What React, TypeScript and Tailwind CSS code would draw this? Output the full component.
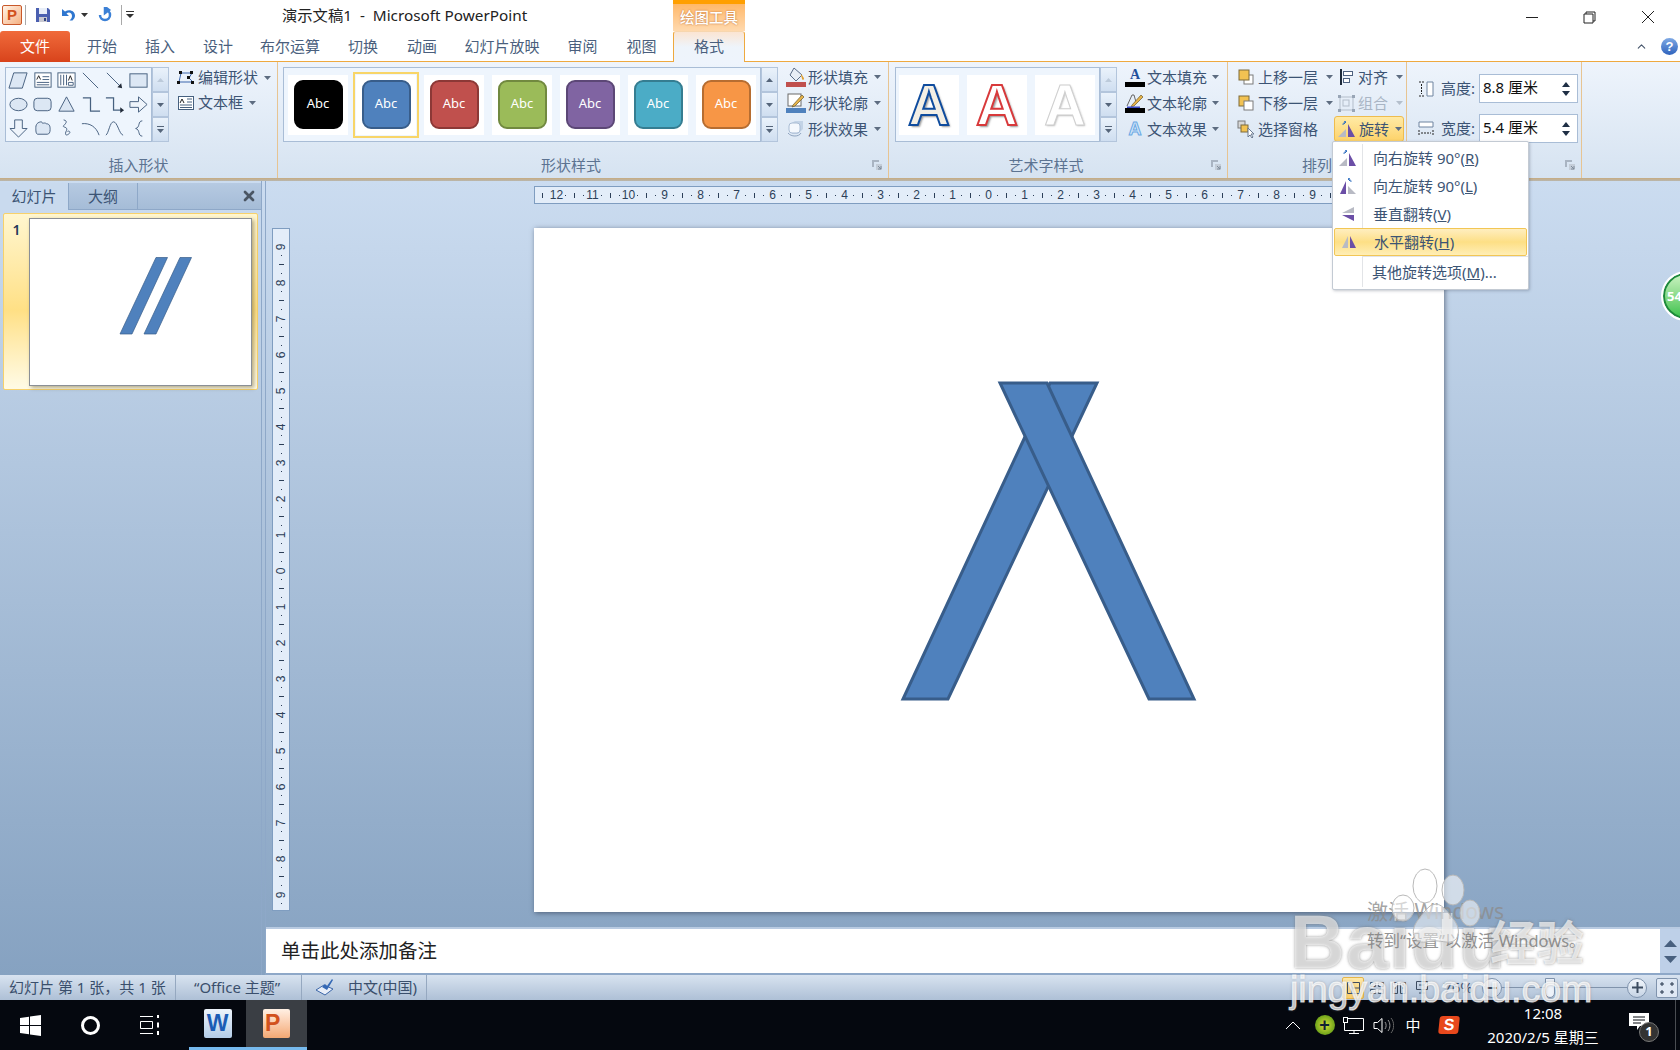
import type { ReactNode } from 'react';
import { ChevronUp, X } from 'lucide-react';

// ---------------------------------------------------------------------------
// Small shared bits
// ---------------------------------------------------------------------------

const INK = '#46607f';

function Caret({ disabled }: { disabled?: boolean }) {
  return (
    <svg width="7" height="4" viewBox="0 0 7 4" className="shrink-0">
      <path d="M0 0h7L3.5 4z" fill={disabled ? '#b4bfcc' : '#5d6c80'} />
    </svg>
  );
}

function Launcher() {
  return (
    <svg width="12" height="12" viewBox="0 0 12 12">
      <path d="M1 1h7v2H3v5H1z" fill="#a9b4c2" />
      <path d="M5 5h6v6H5z" fill="#c4cdd8" />
      <path d="M7 7l3 3M10 7v3H7" stroke="#7f8b9a" fill="none" />
    </svg>
  );
}

function RibbonRow({
  icon,
  label,
  disabled,
  textWidth,
}: {
  icon: ReactNode;
  label: string;
  disabled?: boolean;
  textWidth: string;
}) {
  return (
    <div className="flex h-[26px] items-center">
      <div className="flex w-[24px] shrink-0 justify-center">{icon}</div>
      <span className={`${textWidth} text-[15px] leading-none whitespace-nowrap ${disabled ? 'text-[#a9b5c4]' : 'text-[#3c5474]'}`}>
        {label}
      </span>
      <Caret disabled={disabled} />
    </div>
  );
}

function ScrollButtons({ muted }: { muted?: boolean }) {
  const btn = 'flex h-[25px] items-center justify-center border border-[#b3c5dc] bg-linear-to-b from-[#eaf2fb] to-[#cfdef0]';
  return (
    <div className="flex w-[17px] shrink-0 flex-col">
      <div className={btn}>
        <svg width="7" height="4" viewBox="0 0 7 4"><path d="M0 4h7L3.5 0z" fill={muted ? '#bccada' : '#55657a'} /></svg>
      </div>
      <div className={btn}>
        <svg width="7" height="4" viewBox="0 0 7 4"><path d="M0 0h7L3.5 4z" fill="#55657a" /></svg>
      </div>
      <div className={btn}>
        <svg width="7" height="7" viewBox="0 0 7 7"><path d="M0 0h7v1H0zM0 3h7L3.5 7z" fill="#55657a" /></svg>
      </div>
    </div>
  );
}

function Group({
  className,
  label,
  labelClass = '',
  launcher,
  children,
}: {
  className: string;
  label: string;
  labelClass?: string;
  launcher?: boolean;
  children: ReactNode;
}) {
  return (
    <div className={`flex shrink-0 flex-col border-r border-[#e7c492] ${className}`}>
      <div className="flex h-[92px]">{children}</div>
      <div className="flex h-[24px] items-center pb-[2px]">
        <span className={`flex-1 text-center text-[15px] leading-none text-[#5c7391] ${labelClass}`}>{label}</span>
        {launcher && (
          <div className="mr-[5px] flex">
            <Launcher />
          </div>
        )}
      </div>
    </div>
  );
}

// ---------------------------------------------------------------------------
// Icons drawn for the ribbon
// ---------------------------------------------------------------------------

const shapeFill = '#dce7f4';
const shapeIcons: ReactNode[] = [
  <path key="a" d="M6 3h14l-5 16H1z" fill={shapeFill} stroke={INK} />,
  <g key="b"><rect x="3" y="3" width="17" height="15" fill="#fff" stroke={INK} /><path d="M11 7h7M11 10h7M5 13h13M5 15.500h13" stroke={INK} /><path d="M5 10l2-4 2 4" stroke="#222" fill="none" /></g>,
  <g key="c"><rect x="2" y="3" width="18" height="15" fill="#fff" stroke={INK} /><path d="M5 5v11M8 5v11M11 5v11" stroke={INK} /><path d="M13 11l2-5 2 5" stroke="#222" fill="none" /><path d="M13 13h5v3h-5z" stroke={INK} fill="none" /></g>,
  <path key="d" d="M3 3l16 16" stroke={INK} fill="none" />,
  <g key="e"><path d="M3 3l14 14" stroke={INK} /><path d="M19 19l-5-1 4-4z" fill="#222c3a" /></g>,
  <rect key="f" x="2" y="4" width="18" height="14" fill={shapeFill} stroke={INK} />,
  <ellipse key="g" cx="11" cy="11" rx="9" ry="6.500" fill={shapeFill} stroke={INK} />,
  <rect key="h" x="2" y="4.500" width="18" height="13" rx="3.500" fill={shapeFill} stroke={INK} />,
  <path key="i" d="M11 3l8 15H3z" fill={shapeFill} stroke={INK} />,
  <path key="j" d="M3 4h8v14h10" fill="none" stroke={INK} strokeWidth="1.300" />,
  <g key="k"><path d="M2 4h8v13h9" fill="none" stroke={INK} strokeWidth="1.300" /><path d="M21 17l-4-3v6z" fill="#222c3a" /></g>,
  <path key="l" d="M2 8h9V3l9 8-9 8v-5H2z" fill="#eef4fb" stroke={INK} />,
  <path key="m" d="M7 2h8v9h5l-9 9-9-9h5z" fill="#eef4fb" stroke={INK} />,
  <path key="n" d="M4 10c0-5 4-6 6-6 1 3 3 0 5 2 4 0 4 4 4 6 0 3-1 5-3 5H6c-2 0-2-4-2-7z" fill={shapeFill} stroke={INK} />,
  <path key="o" d="M8 2c5 1 2 4 0 6s5 1 3 5-1 6 2 4 1-4-1-3" fill="none" stroke={INK} />,
  <path key="p" d="M2 6c8-1 15 3 18 12" fill="none" stroke={INK} />,
  <path key="q" d="M2 18c3-2 4-14 8-14s6 13 10 14" fill="none" stroke={INK} />,
  <path key="r" d="M15 3c-5 0-2 7-7 8 5 1 2 8 7 8" fill="none" stroke={INK} />,
];

function EditShapeIcon() {
  return (
    <svg width="18" height="15" viewBox="0 0 18 15">
      <path d="M4 3h11l-3 5 4 4H2z" fill="none" stroke="#3d66ad" />
      <path d="M2 1h3v3H2zM13 1h3v3h-3zM10 6h3v3h-3zM0 11h3v3H0zM14 11h3v3h-3z" fill="#111" />
    </svg>
  );
}

function TextBoxIcon() {
  return (
    <svg width="16" height="14" viewBox="0 0 16 14">
      <rect x="0.500" y="0.500" width="15" height="13" fill="#fff" stroke={INK} />
      <path d="M9 3h5M9 6h5M2 9h12M2 11.500h12" stroke={INK} />
      <path d="M2 7l2-4 2 4" stroke="#222" fill="none" />
    </svg>
  );
}

function FillIcon() {
  return (
    <svg width="20" height="20" viewBox="0 0 20 20">
      <path d="M8 1l8 7-6 6-6-6z" fill="#e8eef6" stroke="#5b6d88" />
      <path d="M15 7c2 2 3 4 3 5s-2 1-2 0-1-3-1-5z" fill="#e0a030" />
      <rect y="15" width="20" height="5" fill="#c0504d" />
    </svg>
  );
}

function OutlineIcon() {
  return (
    <svg width="20" height="20" viewBox="0 0 20 20">
      <rect x="2" y="1" width="13" height="12" fill="#fff" stroke="#6a6a6a" />
      <path d="M7 12l9-10 2 2-9 9-3 1z" fill="#e6b34a" stroke="#6b5a2d" strokeWidth="0.700" />
      <rect y="15" width="20" height="5" fill="#4f81bd" />
    </svg>
  );
}

function EffectIcon() {
  return (
    <svg width="18" height="18" viewBox="0 0 18 18">
      <path d="M3 4l5-3h8v8l-5 5H5z" fill="#c3d3e6" />
      <rect x="2" y="3" width="11" height="10" rx="3" fill="#f4f8fd" stroke="#a9bcd4" />
      <path d="M1 13c3 4 11 4 13 0" stroke="#8ea3bf" fill="none" />
    </svg>
  );
}

function TextFillIcon() {
  return (
    <svg width="20" height="20" viewBox="0 0 20 20">
      <text x="10" y="12" textAnchor="middle" fontSize="14" fontWeight="700" fontFamily="Liberation Serif" fill="#1f4f9c">A</text>
      <rect y="15" width="20" height="5" fill="#000" />
    </svg>
  );
}

function TextOutlineIcon() {
  return (
    <svg width="20" height="20" viewBox="0 0 20 20">
      <path d="M2 13l5-11h2l2 7" fill="none" stroke="#666" />
      <path d="M7 12l9-10 2 2-9 9-3 1z" fill="#e6b34a" stroke="#6b5a2d" strokeWidth="0.700" />
      <rect y="15" width="20" height="5" fill="#000" />
      <rect x="2" y="13.500" width="13" height="1.500" fill="#3b49c9" />
    </svg>
  );
}

function TextEffectIcon() {
  return (
    <svg width="18" height="20" viewBox="0 0 18 20">
      <text x="9" y="16" textAnchor="middle" fontSize="18" fontWeight="700" fontFamily="Liberation Sans" fill="#d4e6f8" stroke="#6aa9e4">A</text>
    </svg>
  );
}

function LayerIcon({ front }: { front: 'up' | 'down' }) {
  return (
    <svg width="16" height="16" viewBox="0 0 16 16">
      {front === 'up' ? (
        <>
          <rect x="6" y="6" width="9" height="9" fill="#fff" stroke="#7b7b7b" />
          <rect x="1" y="1" width="10" height="10" fill="#f2c252" stroke="#7d6a3a" />
        </>
      ) : (
        <>
          <rect x="1" y="1" width="10" height="10" fill="#f2c252" stroke="#7d6a3a" />
          <rect x="6" y="6" width="9" height="9" fill="#fff" stroke="#7b7b7b" />
        </>
      )}
    </svg>
  );
}

function PaneIcon() {
  return (
    <svg width="18" height="18" viewBox="0 0 18 18">
      <rect x="1" y="1" width="7" height="7" fill="#d7d7d7" stroke="#7b7b7b" />
      <rect x="4" y="5" width="7" height="7" fill="#f2c252" stroke="#7d6a3a" />
      <path d="M11 8v9l2-2 2 3 1-1-2-3h3z" fill="#fff" stroke="#6a7a90" />
    </svg>
  );
}

function AlignIcon() {
  return (
    <svg width="15" height="16" viewBox="0 0 15 16">
      <path d="M1 0h2v16H1z" fill="#1e2a3a" />
      <rect x="4.500" y="2.500" width="9" height="4" fill="#fff" stroke="#4f6280" />
      <rect x="4.500" y="9.500" width="6" height="4" fill="#fff" stroke="#4f6280" />
    </svg>
  );
}

function GroupIcon() {
  return (
    <svg width="17" height="17" viewBox="0 0 17 17">
      <rect x="2" y="2" width="13" height="13" fill="none" stroke="#b3bdca" />
      <rect x="5" y="5" width="6" height="6" fill="none" stroke="#b3bdca" />
      <path d="M0 0h3v3H0zM14 0h3v3h-3zM0 14h3v3H0zM14 14h3v3h-3z" fill="#98a5b6" />
    </svg>
  );
}

function FlipIcon({ kind }: { kind: 'right' | 'left' | 'vertical' | 'horizontal' }) {
  const grey = '#b8bac4';
  const purple = '#6b4ea6';
  if (kind === 'vertical') {
    return (
      <svg width="16" height="16" viewBox="0 0 16 16">
        <path d="M14 1v6L2 7z" fill={grey} />
        <path d="M14 15V9L2 9z" fill={purple} />
      </svg>
    );
  }
  if (kind === 'horizontal') {
    return (
      <svg width="16" height="16" viewBox="0 0 16 16">
        <path d="M7 2v12H1z" fill={grey} />
        <path d="M9 2v12h6z" fill={purple} />
      </svg>
    );
  }
  if (kind === 'left') {
    return (
      <svg width="18" height="17" viewBox="0 0 18 17">
        <path d="M7 3v13H1z" fill={purple} />
        <path d="M9 8v8h8z" fill={grey} />
        <path d="M9 1c2 0 3 1 3 3M9 1l2-1M9 1l2 2" stroke="#2f6fc0" fill="none" />
      </svg>
    );
  }
  return (
    <svg width="18" height="17" viewBox="0 0 18 17">
      <path d="M10 3v13h7z" fill={purple} />
      <path d="M8 8v8H0z" fill={grey} />
      <path d="M8 1C6 1 5 2 5 4M8 1L6 0M8 1L6 3" stroke="#2f6fc0" fill="none" />
    </svg>
  );
}

// ---------------------------------------------------------------------------
// Title bar and tabs
// ---------------------------------------------------------------------------

function TitleBar() {
  return (
    <div className="flex h-[31px] shrink-0 bg-white">
      <div className="flex w-[282px] items-center pb-[2px] pl-[2px]">
        <div className="flex h-[20px] w-[20px] items-center justify-center rounded-[2px] border border-[#c9582a] bg-linear-to-br from-[#fff3e6] to-[#f4b183] text-[15px] leading-none font-bold text-[#d2511d] [font-family:'Liberation_Sans',sans-serif]">
          P
        </div>
        <div className="ml-[3px] h-[20px] w-px bg-[#a9a9a9]" />
        <svg width="16" height="16" viewBox="0 0 16 16" className="ml-[9px]">
          <path d="M1 1h12l2 2v12H1z" fill="#4a5fb0" />
          <path d="M4 1h8v6H4z" fill="#e8eef8" />
          <path d="M4 10h8v5H4z" fill="#c8c8d0" />
          <path d="M9 11h2v3H9z" fill="#33457f" />
        </svg>
        <svg width="16" height="16" viewBox="0 0 16 16" className="ml-[9px]">
          <path d="M2 2v7h7L6.500 6.500C9 4.500 12 6 12 9c0 2-1 3-2.500 4.500h3C14 12 15 10.500 15 8.500 15 4 9.500 1.500 5 4.500z" fill="#2f76cf" />
        </svg>
        <div className="ml-[5px] flex"><svg width="7" height="4" viewBox="0 0 7 4"><path d="M0 0h7L3.500 4z" fill="#333" /></svg></div>
        <svg width="16" height="16" viewBox="0 0 16 16" className="ml-[9px]">
          <path d="M3 8a5 5 0 1 0 5-5M8 0v6l4-3z" fill="none" stroke="#3b80d6" strokeWidth="2.500" />
        </svg>
        <div className="ml-[8px] h-[20px] w-px bg-[#a9a9a9]" />
        <svg width="8" height="7" viewBox="0 0 8 7" className="ml-[4px]">
          <path d="M0 0h8v1H0zM0 3h8L4 7z" fill="#333" />
        </svg>
      </div>
      <div className="w-[391px] pt-[6px] text-[15.300px] leading-[18px] whitespace-nowrap text-[#222]">
        演示文稿1&nbsp;&nbsp;-&nbsp;&nbsp;Microsoft PowerPoint
      </div>
      <div className="w-[72px] border-t-4 border-[#ff9f00] bg-linear-to-b from-[#ffb868] to-[#ffd9ae] text-center text-[14.500px] leading-[27px] font-medium text-white [text-shadow:0_0_2px_#b9672a]">
        绘图工具
      </div>
      <div className="flex flex-1 items-start justify-end">
        <div className="flex w-[58px] justify-center pt-[17px]"><div className="h-px w-[12px] bg-[#222]" /></div>
        <div className="flex w-[56px] justify-center pt-[11px]">
          <svg width="13" height="13" viewBox="0 0 13 13"><path d="M3 3V1h9v9h-2M1 3h9v9H1z" fill="none" stroke="#222" /></svg>
        </div>
        <div className="flex w-[63px] justify-center pt-[10px] pr-[2px]">
          <svg width="14" height="14" viewBox="0 0 14 14"><path d="M1 1l12 12M13 1L1 13" stroke="#222" /></svg>
        </div>
      </div>
    </div>
  );
}

const TABS = [
  ['开始', 'w-[58px]'],
  ['插入', 'w-[58px]'],
  ['设计', 'w-[58px]'],
  ['布尔运算', 'w-[86px]'],
  ['切换', 'w-[60px]'],
  ['动画', 'w-[58px]'],
  ['幻灯片放映', 'w-[102px]'],
  ['审阅', 'w-[59px]'],
  ['视图', 'w-[59px]'],
];

function TabRow() {
  return (
    <div className="flex h-[31px] shrink-0 border-b border-[#eea93f] bg-white">
      <div className="mb-[-1px] flex w-[70px] items-center justify-center rounded-t-[3px] bg-linear-to-b from-[#f06a3a] to-[#d8431b] text-[15px] leading-none text-white">
        文件
      </div>
      <div className="w-[3px]" />
      {TABS.map(([name, width]) => (
        <div key={name} className={`flex items-center justify-center text-[15px] leading-none text-[#4a5f7d] ${width}`}>
          {name}
        </div>
      ))}
      <div className="w-[2px]" />
      <div className="mb-[-1px] flex w-[72px] items-center justify-center rounded-t-[3px] border-x border-t border-[#eea93f] border-t-[#f7d6ae] bg-linear-to-b from-[#fbe5d3] via-[#eef4fb] to-[#eef4fc] pb-[2px] text-[15px] leading-none text-[#4a5f7d]">
        格式
      </div>
      <div className="flex flex-1 items-center justify-end pr-[2px]">
        <ChevronUp className="mr-[13px] h-[13px] w-[13px] text-[#44546a]" strokeWidth={2} />
        <div className="flex h-[17px] w-[17px] items-center justify-center rounded-full bg-linear-to-b from-[#7fa9e4] to-[#2f63bd] text-[13px] leading-none font-bold text-white [font-family:'Liberation_Sans',sans-serif]">
          ?
        </div>
      </div>
    </div>
  );
}

// ---------------------------------------------------------------------------
// Ribbon
// ---------------------------------------------------------------------------

const STYLES = [
  ['bg-black', 'border-[#000000]'],
  ['bg-[#4f81bd]', 'border-[#385d8a]'],
  ['bg-[#c0504d]', 'border-[#8c3836]'],
  ['bg-[#9bbb59]', 'border-[#71893f]'],
  ['bg-[#8064a2]', 'border-[#5c4776]'],
  ['bg-[#4bacc6]', 'border-[#357d91]'],
  ['bg-[#f79646]', 'border-[#b66d31]'],
];

function StyleGallery() {
  return (
    <div className="flex h-[75px] w-[478px] shrink-0 items-center gap-[8px] border border-[#a9bdd6] bg-[#eef5fd] pl-[4px]">
      {STYLES.map(([fill, line], i) => (
        <div
          key={fill}
          className={`flex h-[60px] w-[60px] shrink-0 items-center justify-center bg-white ${i === 1 ? 'outline-2 outline-offset-1 outline-[#f8d568]' : ''}`}
        >
          <div className={`flex h-[49px] w-[49px] items-center justify-center rounded-[9px] border-2 pb-[2px] text-[13px] leading-none text-white ${fill} ${line}`}>
            Abc
          </div>
        </div>
      ))}
    </div>
  );
}

function ArtGallery() {
  const letter = "text-[58px] leading-none font-bold [font-family:'Liberation_Sans',sans-serif]";
  return (
    <div className="flex h-[75px] w-[205px] shrink-0 items-center gap-[8px] border border-[#a9bdd6] bg-[#eef5fd] pl-[3px]">
      <div className={`flex h-[60px] w-[60px] items-center justify-center bg-white text-[#f3efe5] [-webkit-text-stroke:2px_#0f4c9e] [text-shadow:2px_2px_2px_#9a9a9a] ${letter}`}>A</div>
      <div className={`flex h-[60px] w-[60px] items-center justify-center bg-white text-white [-webkit-text-stroke:2px_#d8393b] [text-shadow:2px_2px_2px_#9a9a9a] ${letter}`}>A</div>
      <div className={`flex h-[60px] w-[60px] items-center justify-center bg-white text-white [-webkit-text-stroke:1px_#cfcfcf] [text-shadow:1px_1px_2px_#bdbdbd] ${letter}`}>A</div>
    </div>
  );
}

function SizeField({ icon, label, value }: { icon: ReactNode; label: string; value: string }) {
  return (
    <div className="flex h-[29px] items-center">
      <div className="flex w-[34px] shrink-0 justify-center pl-[3px]">{icon}</div>
      <span className="w-[38px] text-[15px] leading-none whitespace-nowrap text-[#3c5474]">{label}</span>
      <div className="flex h-[29px] w-[99px] items-center border border-[#a9bdd6] bg-white pl-[3px] text-[15px] leading-none text-[#111]">
        <span className="flex-1 pb-[3px] whitespace-nowrap">{value}</span>
        <div className="mr-[7px] flex flex-col gap-[4px]">
          <svg width="8" height="5" viewBox="0 0 8 5"><path d="M0 5h8L4 0z" fill="#1f2f45" /></svg>
          <svg width="8" height="5" viewBox="0 0 8 5"><path d="M0 0h8L4 5z" fill="#1f2f45" /></svg>
        </div>
      </div>
    </div>
  );
}

function Ribbon() {
  return (
    <div className="flex h-[116px] shrink-0 bg-linear-to-b from-[#eef4fc] to-[#d6e3f1]">
      <Group className="w-[278px]" label="插入形状">
        <div className="flex pt-[5px] pl-[5px]">
          <div className="grid h-[75px] w-[147px] grid-cols-6 grid-rows-3 border border-[#a9bdd6] bg-[#eef5fd]">
            {shapeIcons.map((icon, i) => (
              <div key={i} className="flex items-center justify-center">
                <svg width="21" height="21" viewBox="0 0 22 22">{icon}</svg>
              </div>
            ))}
          </div>
          <ScrollButtons muted />
        </div>
        <div className="flex flex-col pt-[3px] pl-[8px]">
          <div className="flex h-[25px] items-center gap-[3px]">
            <EditShapeIcon />
            <span className="w-[63px] text-[15px] leading-none whitespace-nowrap text-[#3c5474]">编辑形状</span>
            <Caret />
          </div>
          <div className="flex h-[25px] items-center gap-[4px]">
            <div className="flex w-[17px] justify-center"><TextBoxIcon /></div>
            <span className="w-[47px] text-[15px] leading-none whitespace-nowrap text-[#3c5474]">文本框</span>
            <Caret />
          </div>
        </div>
      </Group>
      <Group className="w-[611px]" label="形状样式" labelClass="pr-[7px]" launcher>
        <div className="flex pt-[5px] pl-[5px]">
          <StyleGallery />
          <ScrollButtons />
        </div>
        <div className="flex flex-col pt-[2px] pl-[6px]">
          <RibbonRow icon={<FillIcon />} label="形状填充" textWidth="w-[66px]" />
          <RibbonRow icon={<OutlineIcon />} label="形状轮廓" textWidth="w-[66px]" />
          <RibbonRow icon={<EffectIcon />} label="形状效果" textWidth="w-[66px]" />
        </div>
      </Group>
      <Group className="w-[339px]" label="艺术字样式" labelClass="pr-[7px]" launcher>
        <div className="flex pt-[5px] pl-[6px]">
          <ArtGallery />
          <ScrollButtons muted />
        </div>
        <div className="flex flex-col pt-[2px] pl-[6px]">
          <RibbonRow icon={<TextFillIcon />} label="文本填充" textWidth="w-[65px]" />
          <RibbonRow icon={<TextOutlineIcon />} label="文本轮廓" textWidth="w-[65px]" />
          <RibbonRow icon={<TextEffectIcon />} label="文本效果" textWidth="w-[65px]" />
        </div>
      </Group>
      <Group className="w-[179px]" label="排列">
        <div className="flex pt-[2px] pl-[6px]">
          <div className="flex w-[100px] flex-col">
            <RibbonRow icon={<LayerIcon front="up" />} label="上移一层" textWidth="w-[68px]" />
            <RibbonRow icon={<LayerIcon front="down" />} label="下移一层" textWidth="w-[68px]" />
            <div className="flex h-[26px] items-center">
              <div className="flex w-[24px] justify-center"><PaneIcon /></div>
              <span className="text-[15px] leading-none whitespace-nowrap text-[#3c5474]">选择窗格</span>
            </div>
          </div>
          <div className="flex flex-col">
            <RibbonRow icon={<AlignIcon />} label="对齐" textWidth="w-[38px]" />
            <RibbonRow icon={<GroupIcon />} label="组合" textWidth="w-[38px]" disabled />
            <div className="flex h-[26px] w-[70px] items-center rounded-[3px] border border-[#eebc4e] bg-linear-to-b from-[#ffeaa5] to-[#fdd268]">
              <div className="flex w-[24px] justify-center"><FlipIcon kind="right" /></div>
              <span className="w-[36px] text-[15px] leading-none text-[#3c5474]">旋转</span>
              <Caret />
            </div>
          </div>
        </div>
      </Group>
      <Group className="w-[175px]" label="大小" launcher>
        <div className="flex flex-col gap-[11px] pt-[12px]">
          <SizeField
            label="高度:"
            value="8.8 厘米"
            icon={
              <svg width="16" height="16" viewBox="0 0 16 16">
                <path d="M9 1h6v14H9z" fill="#fff" stroke="#6f84a0" />
                <path d="M1 1h5M1 15h5M3.500 3v10" stroke="#222" strokeDasharray="2 1" />
              </svg>
            }
          />
          <SizeField
            label="宽度:"
            value="5.4 厘米"
            icon={
              <svg width="16" height="16" viewBox="0 0 16 16">
                <path d="M1 1h14v5H1z" fill="#fff" stroke="#6f84a0" />
                <path d="M1 9v6M15 9v6M3 12h10" stroke="#222" strokeDasharray="2 1" />
              </svg>
            }
          />
        </div>
      </Group>
      <div className="flex-1" />
    </div>
  );
}

// ---------------------------------------------------------------------------
// Rulers
// ---------------------------------------------------------------------------

const RULER_VALUES = [12, 11, 10, 9, 8, 7, 6, 5, 4, 3, 2, 1, 0, 1, 2, 3, 4, 5, 6, 7, 8, 9, 10];
const V_RULER_VALUES = [9, 8, 7, 6, 5, 4, 3, 2, 1, 0, 1, 2, 3, 4, 5, 6, 7, 8, 9];

function HorizontalRuler() {
  return (
    <div className="ml-[268px] flex h-[18px] w-[820px] items-center overflow-hidden border border-[#7f9dc0] bg-[#e3edf9] pl-[7px] text-[12px] leading-none text-[#2c3f58] [font-family:'Liberation_Sans',sans-serif]">
      <div className="mr-[9px] h-[5px] w-px shrink-0 bg-[#2c3f58]" />
      {RULER_VALUES.map((v, i) => (
        <div key={i} className="grid w-[36px] shrink-0 grid-cols-4 items-center justify-items-center">
          <span>{v}</span>
          <div className="h-px w-px bg-[#2c3f58]" />
          <div className="h-[5px] w-px bg-[#2c3f58]" />
          <div className="h-px w-px bg-[#2c3f58]" />
        </div>
      ))}
    </div>
  );
}

function VerticalRuler() {
  return (
    <div className="ml-[6px] flex h-[683px] w-[18px] shrink-0 flex-col items-center overflow-hidden border border-[#7f9dc0] bg-[#e3edf9] pt-[13px] text-[12px] leading-none text-[#2c3f58] [font-family:'Liberation_Sans',sans-serif]">
      {V_RULER_VALUES.map((v, i) => (
        <div key={i} className="grid h-[36px] shrink-0 grid-rows-4 items-center justify-items-center">
          <span className="-rotate-90">{v}</span>
          <div className="h-px w-px bg-[#2c3f58]" />
          <div className="h-px w-[5px] bg-[#2c3f58]" />
          <div className="h-px w-px bg-[#2c3f58]" />
        </div>
      ))}
    </div>
  );
}

// ---------------------------------------------------------------------------
// Panels
// ---------------------------------------------------------------------------

function SlidePanel() {
  return (
    <div className="flex w-[262px] shrink-0 flex-col border-r border-[#8ea8c8] pt-[2px]">
      <div className="flex h-[27px] border-b border-[#8ea8c8]">
        <div className="mb-[-1px] flex w-[69px] items-center justify-center border-r border-[#8ea8c8] bg-[#c9daee] text-[15px] leading-none text-[#3c5474]">
          幻灯片
        </div>
        <div className="flex w-[69px] items-center justify-center border-r border-[#8ea8c8] bg-linear-to-b from-[#b6cae2] to-[#a5bcd7] text-[15px] leading-none text-[#3c5474]">
          大纲
        </div>
        <div className="flex flex-1 items-center justify-end bg-linear-to-b from-[#b6cae2] to-[#a5bcd7] pr-[4px]">
          <X className="h-[16px] w-[16px] text-[#4a5563]" strokeWidth={4} />
        </div>
      </div>
      <div className="mx-[3px] mt-[3px] flex h-[177px] items-start rounded-[2px] border border-[#f7d16b] bg-linear-to-b from-[#fff6cf] via-[#ffe085] via-55% to-[#fffbe6] pt-[4px]">
        <span className="w-[25px] pt-[5px] text-center text-[14px] leading-none font-semibold text-[#22395a]">1</span>
        <div className="h-[168px] w-[223px] border border-[#8a8f96] bg-white shadow-[2px_2px_4px_rgba(90,80,40,0.450)]">
          <svg width="221" height="166" viewBox="0 0 221 166">
            <path d="M126 38.500h11.500L102 115H90z" fill="#4f81bd" stroke="#385d8a" strokeWidth="0.700" />
            <path d="M150 38.500h11.500L126 115h-12z" fill="#4f81bd" stroke="#385d8a" strokeWidth="0.700" />
          </svg>
        </div>
      </div>
    </div>
  );
}

function Slide() {
  return (
    <div className="ml-[244px] h-[684px] w-[910px] shrink-0 bg-white shadow-[1px_1px_5px_rgba(40,50,70,0.600)]">
      <svg width="910" height="684" viewBox="0 0 910 684">
        <path d="M516 155h47L414 471h-45z" fill="#4f81bd" stroke="#385d8a" strokeWidth="3" />
        <path d="M466 155h47L660 471h-45z" fill="#4f81bd" stroke="#385d8a" strokeWidth="3" />
      </svg>
    </div>
  );
}

function Editor() {
  return (
    <div className="flex flex-1 flex-col">
      <div className="flex-1 pt-[5px]">
        <HorizontalRuler />
        <div className="mt-[24px] flex">
          <VerticalRuler />
          <Slide />
        </div>
      </div>
      <div className="flex h-[46px] shrink-0 border-t-2 border-[#b9cbe2] bg-white">
        <div className="flex-1 pt-[10px] pl-[15px] text-[19.500px] leading-[24px] text-[#222]">单击此处添加备注</div>
        <div className="flex w-[20px] flex-col items-center justify-around bg-[#bed0e8] py-[6px]">
          <svg width="13" height="7" viewBox="0 0 13 7"><path d="M0 7h13L6.500 0z" fill="#48607f" /></svg>
          <svg width="13" height="7" viewBox="0 0 13 7"><path d="M0 0h13L6.500 7z" fill="#48607f" /></svg>
        </div>
      </div>
      <div className="h-[2px] shrink-0 bg-[#8ea8c8]" />
    </div>
  );
}

// ---------------------------------------------------------------------------
// Status bar and task bar
// ---------------------------------------------------------------------------

function StatusBar() {
  return (
    <div className="flex h-[25px] shrink-0 items-center bg-linear-to-b from-[#d8e3f0] to-[#aec0d6] text-[15px] leading-none text-[#3a4f6c]">
      <div className="w-[176px] border-r border-[#95a8c0] py-[5px] pl-[9px] whitespace-nowrap">幻灯片 第 1 张，共 1 张</div>
      <div className="w-[126px] border-r border-[#95a8c0] py-[5px] pl-[18px] whitespace-nowrap">“Office 主题”</div>
      <div className="flex w-[46px] justify-center">
        <svg width="20" height="20" viewBox="0 0 20 20">
          <path d="M1 12l8-5 9 4-8 6z" fill="#e8eef8" stroke="#3b66a8" />
          <path d="M7 9l3-3 2 2 5-7 1 1-6 10z" fill="#3468b5" />
        </svg>
      </div>
      <div className="w-[79px] border-r border-[#95a8c0] py-[5px] whitespace-nowrap">中文(中国)</div>
      <div className="flex-1" />
      <div className="flex h-[22px] w-[22px] items-center justify-center rounded-[2px] border border-[#e4b54b] bg-linear-to-b from-[#ffe9a8] to-[#fdd06a]">
        <svg width="13" height="12" viewBox="0 0 13 12"><path d="M.5.5h12v11H.5zM5 .5v11M5 6h7.500" fill="none" stroke="#3d4c60" /></svg>
      </div>
      <div className="ml-[2px] flex w-[22px] justify-center">
        <svg width="14" height="12" viewBox="0 0 14 12"><path d="M.5.500h5v4h-5zM8.500.500h5v4h-5zM.5 7.500h5v4h-5zM8.500 7.500h5v4h-5z" fill="none" stroke="#3d4c60" /></svg>
      </div>
      <div className="flex w-[21px] justify-center">
        <svg width="14" height="12" viewBox="0 0 14 12"><path d="M.5.500h5v11h-5zM8.500.500h5v11h-5zM2 3h2M2 6h2M10 3h2M10 6h2" fill="none" stroke="#3d4c60" /></svg>
      </div>
      <div className="ml-[2px] flex w-[22px] justify-center">
        <svg width="14" height="13" viewBox="0 0 14 13"><path d="M1.500.500h11v8h-11zM7 8.500v3M4 12h6M4 4h6" fill="none" stroke="#3d4c60" /></svg>
      </div>
      <div className="ml-[10px] w-[30px] text-center whitespace-nowrap">76%</div>
      <div className="ml-[9px] flex h-[20px] w-[20px] items-center justify-center rounded-full border border-[#7f93ad] bg-linear-to-b from-[#f3f7fc] to-[#c5d3e4]">
        <div className="h-[2px] w-[10px] bg-[#3d4c60]" />
      </div>
      <div className="flex w-[125px] items-center">
        <div className="h-px flex-1 bg-[#8093ab]" />
        <div className="h-[20px] w-[10px] rounded-b-[5px] border border-[#7f93ad] bg-[#eef3fa]" />
        <div className="h-px w-[72px] bg-[#8093ab]" />
      </div>
      <div className="flex h-[20px] w-[20px] items-center justify-center rounded-full border border-[#7f93ad] bg-linear-to-b from-[#f3f7fc] to-[#c5d3e4]">
        <svg width="11" height="11" viewBox="0 0 11 11"><path d="M0 5.500h11M5.500 0v11" stroke="#3d4c60" strokeWidth="2" /></svg>
      </div>
      <div className="mr-[2px] ml-[9px] flex h-[20px] w-[22px] items-center justify-center rounded-[2px] border border-[#7f93ad] bg-[#dfe8f4]">
        <svg width="16" height="14" viewBox="0 0 16 14"><path d="M3 1v4M1 3h4M13 1v4M11 3h4M3 9v4M1 11h4M13 9v4M11 11h4" stroke="#26364c" /></svg>
      </div>
    </div>
  );
}

function TaskBar() {
  return (
    <div className="flex h-[50px] shrink-0 items-center bg-[#05080f] text-white">
      <div className="flex w-[60px] justify-center">
        <svg width="21" height="21" viewBox="0 0 21 21">
          <path d="M0 3l9-1.300V10H0zM10 1.500L21 0v10H10zM0 11h9v8.300L0 18zM10 11h11v10l-11-1.500z" fill="#fff" />
        </svg>
      </div>
      <div className="flex w-[60px] justify-center">
        <div className="h-[19px] w-[19px] rounded-full border-[3px] border-white" />
      </div>
      <div className="flex w-[60px] justify-center">
        <svg width="20" height="20" viewBox="0 0 20 20">
          <path d="M0 1.500h13M0 18.500h13M.5 6.500h12v7H.5z" fill="none" stroke="#fff" />
          <path d="M18 0v3M18 7.500v5M18 16v4" stroke="#fff" strokeWidth="2" />
        </svg>
      </div>
      <div className="ml-[9px] flex h-full w-[57px] items-center justify-center border-b-[3px] border-[#76b9ed]">
        <div className="flex h-[29px] w-[28px] items-center justify-center rounded-[2px] bg-linear-to-b from-[#eef4fb] to-[#b4cde8] text-[23px] leading-none font-bold text-[#1b5cb5] [font-family:'Liberation_Sans',sans-serif]">
          W
        </div>
      </div>
      <div className="flex h-full w-[61px] items-center justify-center border-b-[3px] border-[#76b9ed] bg-[#3a3e44]">
        <div className="flex h-[29px] w-[27px] items-center justify-start rounded-[2px] bg-linear-to-b from-[#fff0e4] to-[#f3a873] pl-[2px] text-[23px] leading-none font-bold text-[#d2511d] [font-family:'Liberation_Sans',sans-serif]">
          P
        </div>
      </div>
      <div className="flex-1" />
      <div className="flex w-[36px] justify-center">
        <svg width="16" height="9" viewBox="0 0 16 9"><path d="M1 8l7-7 7 7" fill="none" stroke="#fff" /></svg>
      </div>
      <div className="flex w-[27px] justify-center">
        <div className="flex h-[20px] w-[20px] items-center justify-center rounded-full bg-radial from-[#d8e23a] to-[#3e8a0c] text-[18px] leading-none font-bold text-[#123] [font-family:'Liberation_Sans',sans-serif]">
          +
        </div>
      </div>
      <div className="flex w-[31px] justify-center">
        <svg width="21" height="17" viewBox="0 0 21 17">
          <path d="M5 1.500h15.500v12H1.500V5M11 13.500v3M6 16.500h10" fill="none" stroke="#fff" />
          <rect x="0.500" y="0.500" width="4" height="5" fill="#05080f" stroke="#fff" />
        </svg>
      </div>
      <div className="flex w-[29px] justify-center">
        <svg width="21" height="17" viewBox="0 0 21 17">
          <path d="M1 5.500h3.500L9 1.500v14l-4.500-4H1z" fill="none" stroke="#fff" />
          <path d="M12 5c1.500 2 1.500 5 0 7M15 3c2.500 3 2.500 8 0 11" fill="none" stroke="#9a9a9a" />
          <path d="M18 1c3.500 4 3.500 11 0 15" fill="none" stroke="#666" />
        </svg>
      </div>
      <div className="w-[30px] text-center text-[15px] leading-none">中</div>
      <div className="flex w-[42px] justify-center">
        <div className="flex h-[18px] w-[20px] -skew-x-6 items-center justify-center rounded-[3px] bg-[#e8481c] text-[16px] leading-none font-bold text-white [font-family:'Liberation_Sans',sans-serif]">
          S
        </div>
      </div>
      <div className="flex w-[146px] flex-col items-center gap-[9px] text-[15px] leading-none whitespace-nowrap">
        <span>12:08</span>
        <span>2020/2/5 星期三</span>
      </div>
      <div className="relative flex w-[46px] justify-center pb-[8px]">
        <svg width="20" height="17" viewBox="0 0 20 17">
          <path d="M0 0h20v13H11l-3 4v-4H0z" fill="#fff" />
          <path d="M4 4h12M4 7h12M4 10h8" stroke="#05080f" />
        </svg>
        <div className="absolute top-[9px] left-[23px] flex h-[20px] w-[20px] items-center justify-center rounded-full border border-[#777] bg-[#333] text-[13px] leading-none font-bold text-white">
          1
        </div>
      </div>
      <div className="w-[13px]" />
      <div className="mr-[4px] h-full w-px bg-[#4a4d52]" />
    </div>
  );
}

// ---------------------------------------------------------------------------
// Overlays
// ---------------------------------------------------------------------------

const MENU_ITEMS = [
  { icon: <FlipIcon kind="right" />, text: '向右旋转 90°(', key: 'R', tail: ')' },
  { icon: <FlipIcon kind="left" />, text: '向左旋转 90°(', key: 'L', tail: ')' },
  { icon: <FlipIcon kind="vertical" />, text: '垂直翻转(', key: 'V', tail: ')' },
  { icon: <FlipIcon kind="horizontal" />, text: '水平翻转(', key: 'H', tail: ')', active: true },
];

function RotateMenu() {
  return (
    <div className="absolute top-[141px] left-[1332px] w-[197px] rounded-[2px] border border-[#c3cad3] bg-white py-[2px] text-[15px] leading-none text-[#3c5474] shadow-[1px_1px_3px_rgba(60,70,90,0.300)]">
      {MENU_ITEMS.map((item) => (
        <div
          key={item.key}
          className={`mx-[1px] flex h-[28px] items-center rounded-[2px] ${item.active ? 'border border-[#f2c655] bg-linear-to-b from-[#ffeebf] via-[#fddf85] to-[#ffeeb5]' : ''}`}
        >
          <div className="flex w-[28px] justify-center">{item.icon}</div>
          <div className={`h-full w-px ${item.active ? '' : 'bg-[#e2e4e7]'}`} />
          <span className="pl-[10px] whitespace-nowrap">
            {item.text}
            <u>{item.key}</u>
            {item.tail}
          </span>
        </div>
      ))}
      <div className="ml-[29px] h-px bg-[#e2e4e7]" />
      <div className="mx-[1px] flex h-[30px] items-center">
        <div className="w-[28px]" />
        <div className="h-full w-px bg-[#e2e4e7]" />
        <span className="pl-[9px] whitespace-nowrap">
          其他旋转选项(<u>M</u>)...
        </span>
      </div>
    </div>
  );
}

function GreenBadge() {
  return (
    <div className="absolute top-[273px] left-[1663px] flex h-[46px] w-[46px] items-center rounded-full border-2 border-[#1d8a3a] bg-linear-to-b from-[#c8f2c0] to-[#35c24c] pl-[2px] outline-2 outline-white">
      <span className="text-[13px] leading-none font-bold text-white">54</span>
    </div>
  );
}

function Watermark() {
  const logo = "text-[76px] leading-none font-bold text-white/60 [font-family:'Liberation_Sans',sans-serif] [text-shadow:0_0_3px_rgba(110,110,110,0.700)]";
  return (
    <div className="pointer-events-none absolute top-[868px] left-[1290px] flex w-[310px] flex-col">
      <div className="absolute top-[33px] left-[77px] text-[21px] leading-none whitespace-nowrap text-[#8c8c8c]/80">激活 Windows</div>
      <div className="absolute top-[65px] left-[77px] text-[16.500px] leading-none whitespace-nowrap text-[#777]/80">转到“设置”以激活 Windows。</div>
      <svg width="110" height="100" viewBox="0 0 110 100" className="absolute top-0 left-[100px]">
        <ellipse cx="35" cy="18" rx="12" ry="17" fill="#ffffff" fillOpacity="0.550" stroke="#b9b9b9" />
        <ellipse cx="63" cy="22" rx="11" ry="15" fill="#ffffff" fillOpacity="0.600" stroke="#b9b9b9" />
        <ellipse cx="13" cy="40" rx="11" ry="13" fill="#ffffff" fillOpacity="0.550" stroke="#b9b9b9" />
        <ellipse cx="80" cy="45" rx="10" ry="13" fill="#ffffff" fillOpacity="0.550" stroke="#b9b9b9" />
        <path d="M40 38c10-6 16 4 24 14 8 10 5 24-8 22-8-1-12-2-20 0-14 2-16-12-8-22 4-5 8-11 12-14z" fill="#ffffff" fillOpacity="0.500" stroke="#b9b9b9" />
      </svg>
      <div className="mt-[36px] flex items-center">
        <span className={`w-[200px] tracking-[1px] whitespace-nowrap ${logo}`}>Baidu</span>
        <span className="text-[47px] leading-none font-bold whitespace-nowrap text-white/70 [text-shadow:0_0_3px_rgba(110,110,110,0.700)]">经验</span>
      </div>
      <div className="mt-[-9px] text-[37.500px] leading-none font-normal whitespace-nowrap text-white/70 [-webkit-text-stroke:1px_rgba(255,255,255,0.700)] [font-family:'Liberation_Sans',sans-serif] [text-shadow:0_0_3px_rgba(110,110,110,0.600)]">
        jingyan.baidu.com
      </div>
    </div>
  );
}

// ---------------------------------------------------------------------------
// Page
// ---------------------------------------------------------------------------

export default function App() {
  return (
    <div className="relative flex h-[1050px] w-[1680px] flex-col overflow-hidden [font-family:'Noto_Sans','Noto_Sans_CJK_SC',sans-serif]">
      <TitleBar />
      <TabRow />
      <Ribbon />
      <div className="h-[3px] shrink-0 bg-linear-to-b from-[#c7ab80] to-[#b8b6ae]" />
      <div className="flex min-h-0 flex-1 bg-linear-to-b from-[#cbdcf0] to-[#86a2c1]">
        <SlidePanel />
        <div className="w-[4px] shrink-0 border-r border-[#8ea8c8]" />
        <Editor />
      </div>
      <StatusBar />
      <TaskBar />
      <RotateMenu />
      <GreenBadge />
      <Watermark />
    </div>
  );
}
